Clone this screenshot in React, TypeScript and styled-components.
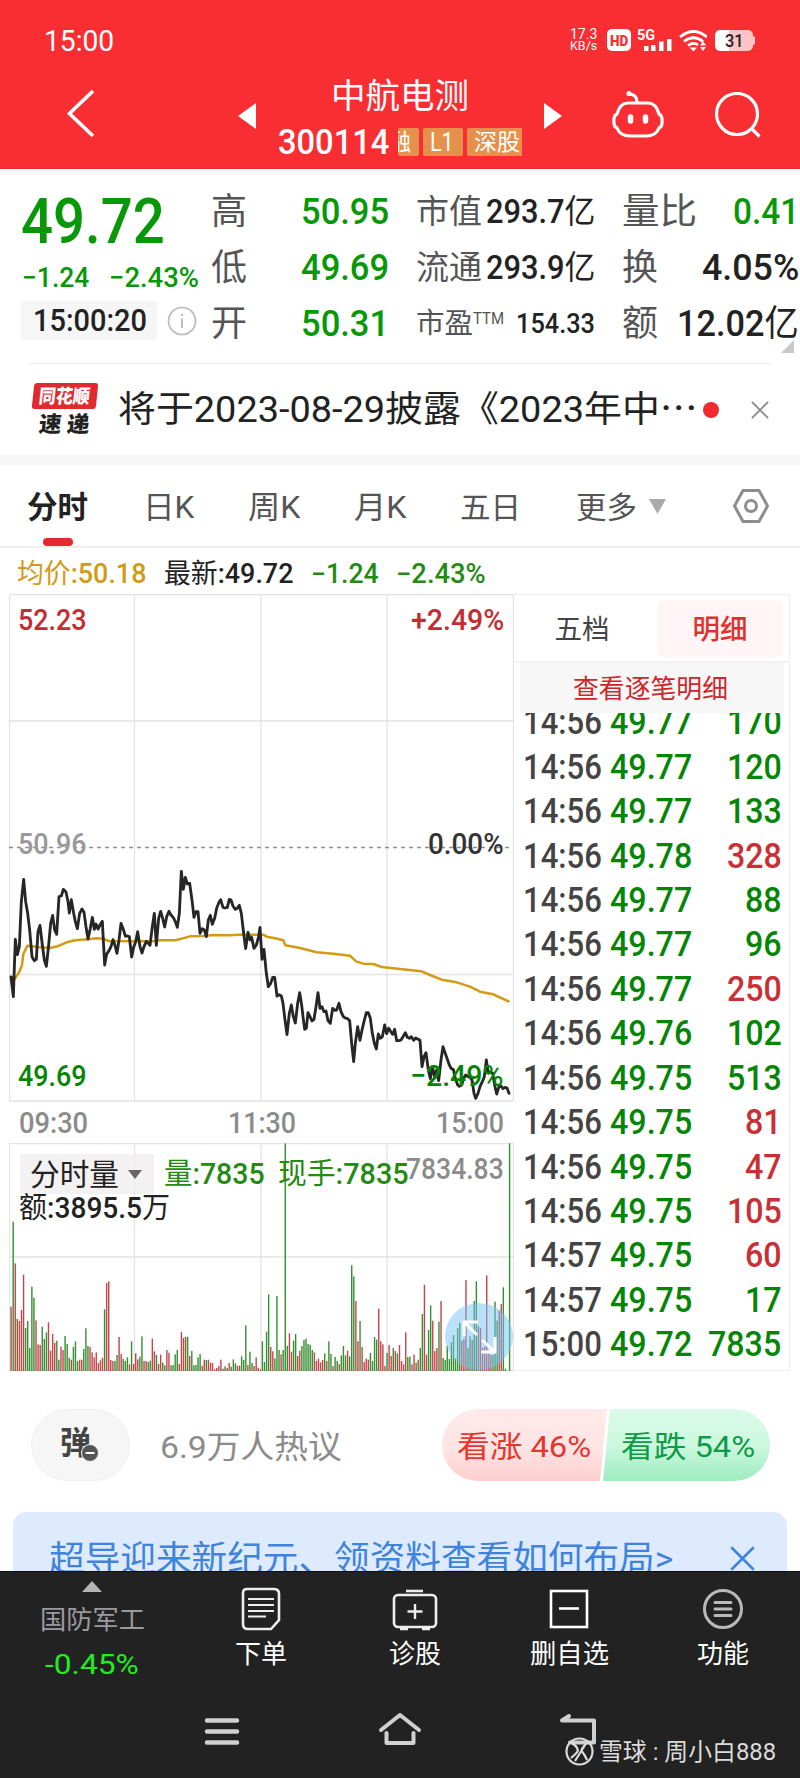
import React, { useLayoutEffect, useRef, useState } from "react";
import styled, { createGlobalStyle } from "styled-components";

const GlobalStyle = createGlobalStyle`
  * { box-sizing: border-box; }
  body { margin: 0; background: #fff; }
  svg { display: block; flex: none; }
`;

const C = {
  red: "#f92e33",
  green: "#069806",
  deepGreen: "#238a12",
  tradeGreen: "#058505",
  tradeRed: "#c92f35",
  ink: "#222",
  label: "#555",
  grey: "#8b8b8b",
  line: "#e4e4e6",
};

/* ---------- text fitted to a column width ---------- */

const FitBox = styled.span<{ $w: number; $h: number }>`
  display: block;
  flex: none;
  width: ${(p) => p.$w}px;
  height: ${(p) => p.$h}px;
`;

const FitText = styled.span<{ $size: number; $h: number; $color: string; $weight: number }>`
  display: inline-block;
  vertical-align: top;
  white-space: pre;
  transform-origin: 0 50%;
  font-family: Roboto, "Noto Sans CJK SC", sans-serif;
  font-size: ${(p) => p.$size}px;
  line-height: ${(p) => p.$h}px;
  font-weight: ${(p) => p.$weight};
  color: ${(p) => p.$color};
`;

const Han = styled.span`
  font-weight: 400;
`;

interface FitProps {
  w: number;
  size: number;
  h?: number;
  color?: string;
  weight?: number;
  children: string;
}

// Medium-weight figures are paired with regular-weight characters.
function Fit({ w, size, h, color = C.ink, weight = 400, children }: FitProps) {
  const ref = useRef<HTMLSpanElement>(null);
  const [scale, setScale] = useState(1);
  const height = h ?? Math.round(size * 1.2);
  useLayoutEffect(() => {
    if (ref.current) setScale(w / ref.current.offsetWidth);
  }, [w, size, children]);
  const parts = weight === 500 ? children.split(/([\u4e00-\u9fff]+)/).filter(Boolean) : [children];
  return (
    <FitBox $w={w} $h={height}>
      <FitText ref={ref} $size={size} $h={height} $color={color} $weight={weight} style={{ transform: `translateY(1px) scaleX(${scale})` }}>
        {parts.map((part, i) => (weight === 500 && /[\u4e00-\u9fff]/.test(part) ? <Han key={i}>{part}</Han> : part))}
      </FitText>
    </FitBox>
  );
}

/* ---------- page ---------- */

const Page = styled.div`
  width: 800px;
  height: 1778px;
  overflow: hidden;
  display: flex;
  flex-direction: column;
  background: #fff;
`;

const Header = styled.header`
  height: 169px;
  flex: none;
  background: ${C.red};
  border-bottom: 1px solid #d92c33;
`;

const StatusBar = styled.div`
  height: 73px;
  padding: 7px 45px 0 44px;
  display: flex;
  align-items: center;
  justify-content: space-between;
`;

const StatusIcons = styled.div`
  display: flex;
  align-items: center;
`;

const Speed = styled.div`
  width: 28px;
  margin: -3px 9px 0 0;
`;

const HdBadge = styled.div`
  width: 24px;
  height: 22px;
  margin-right: 6px;
  border-radius: 5px;
  background: #fff;
  display: flex;
  justify-content: center;
  align-items: center;
`;

const Battery = styled.div`
  width: 38px;
  height: 21px;
  margin-left: 8px;
  border-radius: 5px;
  background: linear-gradient(90deg, #fff 36%, #fdc3c6 36%);
  display: flex;
  justify-content: center;
`;

const BatteryTip = styled.div`
  width: 2px;
  height: 9px;
  border-radius: 0 2px 2px 0;
  background: #fdc3c6;
`;

const TitleBar = styled.div`
  height: 95px;
  display: flex;
  align-items: flex-start;
  padding-left: 66px;
`;

const IconSlot = styled.div<{ $top: number; $left: number }>`
  margin-top: ${(p) => p.$top}px;
  margin-left: ${(p) => p.$left}px;
`;

const TitleBlock = styled.div`
  width: 244px;
  margin-left: 22px;
  display: flex;
  flex-direction: column;
`;

const TitleName = styled.div`
  padding-left: 53px;
`;

const CodeRow = styled.div`
  display: flex;
  height: 30px;
  margin-top: 10px;
  align-items: center;
`;

const Tags = styled.div`
  display: flex;
  gap: 4px;
  width: 125px;
  height: 28px;
  margin-left: 9px;
  overflow: hidden;
`;

const Tag = styled.div<{ $w: number; $pad: number }>`
  flex: none;
  width: ${(p) => p.$w}px;
  padding-left: ${(p) => p.$pad}px;
  height: 28px;
  border-radius: 2px;
  background: #e6914b;
  overflow: hidden;
`;

const ClippedLeft = styled.div`
  margin-left: -11px;
`;

/* quote */

const Quote = styled.section`
  height: 194px;
  flex: none;
  display: flex;
  padding-top: 14px;
  position: relative;
`;

const PriceColumn = styled.div`
  width: 211px;
  padding-left: 21px;
`;

const ChangeRow = styled.div`
  display: flex;
  gap: 20px;
  margin-top: 2px;
  padding-left: 1px;
`;

const TimeRow = styled.div`
  display: flex;
  align-items: center;
  gap: 10px;
  margin-top: 8px;
`;

const TimeChip = styled.div`
  width: 136px;
  height: 39px;
  background: #f6f6f7;
  padding-left: 12px;
`;

const Stats = styled.div<{ $w: number; $gap: number }>`
  width: ${(p) => p.$w}px;
  margin-right: ${(p) => p.$gap}px;
`;

const StatRow = styled.div`
  height: 56px;
  display: flex;
  align-items: center;
  justify-content: space-between;
`;

const PeLabel = styled.div`
  display: flex;
  align-items: flex-start;
`;

const Corner = styled.svg`
  position: absolute;
  left: 781px;
  top: 171px;
`;

const Notice = styled.section`
  height: 92px;
  flex: none;
  display: flex;
  align-items: center;
  margin: 0 30px;
  border-top: 1px solid #ececec;
`;

const NewsLogo = styled.div`
  flex: none;
  width: 64px;
  height: 56px;
  display: flex;
  flex-direction: column;
  margin: 2px 21px 0 3px;
`;

const LogoTop = styled.div`
  height: 28px;
  padding-left: 6px;
  background: #df2a30;
  border-radius: 3px;
  transform: skewX(-6deg);
`;

const LogoBottom = styled.div`
  padding-left: 6px;
  transform: skewX(-6deg);
`;

const Dot = styled.i`
  flex: none;
  width: 16px;
  height: 16px;
  border-radius: 50%;
  background: #ef2b30;
  margin: 0 32px 0 5px;
`;

const Band = styled.div`
  height: 10px;
  flex: none;
  background: #f6f6f7;
`;

const Tabs = styled.nav`
  height: 83px;
  flex: none;
  border-bottom: 2px solid #efeff0;
  display: flex;
  padding-left: 27px;
`;

const Tab = styled.div<{ $left?: number }>`
  margin-left: ${(p) => p.$left ?? 0}px;
  display: flex;
  flex-direction: column;
  align-items: center;
  justify-content: space-between;
  padding-top: 23px;
`;

const TabMark = styled.i`
  width: 30px;
  height: 8px;
  border-radius: 4px;
  background: #e8272d;
`;

const Summary = styled.div`
  height: 46px;
  flex: none;
  display: flex;
  align-items: center;
  padding: 3px 0 0 17px;
`;

const Gap = styled.i<{ $w: number }>`
  width: ${(p) => p.$w}px;
`;

const Market = styled.section`
  height: 777px;
  flex: none;
  display: flex;
  padding-left: 9px;
`;

const Charts = styled.div`
  width: 505px;
`;

const Canvas = styled.div<{ $h: number }>`
  position: relative;
  height: ${(p) => p.$h}px;
`;

const Pin = styled.div<{ $x: number; $y: number }>`
  position: absolute;
  left: ${(p) => p.$x}px;
  top: ${(p) => p.$y}px;
`;

const Axis = styled.div`
  height: 42px;
  display: flex;
  align-items: center;
  padding: 0 10px;
  justify-content: space-between;
`;

const VolumeChip = styled.div`
  width: 134px;
  height: 40px;
  padding-left: 10px;
  background: rgba(240, 236, 238, 0.75);
  display: flex;
  align-items: center;
  gap: 9px;
`;

const Expand = styled.button`
  position: absolute;
  left: 436px;
  top: 160px;
  width: 68px;
  height: 67px;
  border: 0;
  padding: 0;
  border-radius: 50%;
  background: rgba(120, 195, 245, 0.5);
`;

const Trades = styled.div`
  width: 276px;
  border: 1px solid #eeeef0;
  border-left: 0;
  overflow: hidden;
`;

const BookTabs = styled.div`
  height: 68px;
  border-bottom: 2px solid #f2f2f3;
  display: flex;
  align-items: center;
  padding-left: 6px;
`;

const BookTab = styled.div<{ $active?: boolean; $w: number }>`
  width: ${(p) => p.$w}px;
  height: 57px;
  display: flex;
  justify-content: center;
  align-items: center;
  border-radius: 8px;
  background: ${(p) => (p.$active ? "#fff4f6" : "transparent")};
`;

const DetailLink = styled.div`
  height: 50px;
  margin: 0 5px 0 6px;
  padding: 1px 3px 0 0;
  background: #f7f7f7;
  display: flex;
  justify-content: center;
  align-items: center;
`;

const TradeList = styled.div`
  height: 657px;
  overflow: hidden;
`;

const TradeRows = styled.div`
  margin-top: -13px;
`;

const TradeRow = styled.div`
  height: 44.45px;
  display: flex;
  align-items: center;
  padding: 0 7px 0 9px;
`;

const TradePrice = styled.div`
  margin-left: 8px;
  flex: 1;
`;

/* social */

const Social = styled.section`
  height: 103px;
  margin-top: 38px;
  flex: none;
  display: flex;
  align-items: flex-start;
  padding-left: 31px;
`;

const Bullet = styled.div`
  width: 99px;
  height: 72px;
  border-radius: 36px;
  background: #f6f6f7;
  border: 1px solid #f0f0f0;
  position: relative;
  padding: 13px 0 0 28px;
`;

const BulletBadge = styled.svg`
  position: absolute;
  left: 48px;
  top: 33px;
`;

const HotText = styled.div`
  margin: 19px 0 0 30px;
`;

const Votes = styled.div`
  width: 328px;
  height: 72px;
  margin-left: 100px;
  display: flex;
  border-radius: 36px;
  overflow: hidden;
`;

const Vote = styled.div<{ $up?: boolean }>`
  height: 72px;
  width: ${(p) => (p.$up ? 167 : 168)}px;
  margin-left: ${(p) => (p.$up ? 0 : -7)}px;
  padding: 1px 0 0 ${(p) => (p.$up ? 15 : 19)}px;
  display: flex;
  align-items: center;
  background: ${(p) =>
    p.$up ? "linear-gradient(#ffeaea, #ffe4e4 55%, #fdcfcd)" : "linear-gradient(#dcfaea, #cdf8df 50%, #9eecbf)"};
  clip-path: ${(p) =>
    p.$up ? "polygon(0 0, 165px 0, 158px 100%, 0 100%)" : "polygon(8px 0, 100% 0, 100% 100%, 1px 100%)"};
`;

const Banner = styled.div`
  height: 59px;
  flex: none;
  margin: 0 13px;
  padding: 22px 32px 0 36px;
  border-radius: 14px 14px 0 0;
  background: #deebfe;
  display: flex;
  justify-content: space-between;
  overflow: hidden;
`;

const Dock = styled.footer`
  flex: none;
  height: 207px;
  background: #222;
  border-top: 1px solid #111;
  position: relative;
`;

const DockRow = styled.div`
  height: 121px;
  display: flex;
`;

const Sector = styled.div`
  width: 184px;
  display: flex;
  flex-direction: column;
  align-items: center;
  padding-top: 9px;
`;

const DockItem = styled.div`
  width: 154px;
  display: flex;
  flex-direction: column;
  align-items: center;
  padding-top: 15px;
  gap: 6px;
`;

const SystemNav = styled.div`
  display: flex;
  padding: 18px 0 0 202px;
`;

const Watermark = styled.div`
  position: absolute;
  left: 565px;
  top: 165px;
  display: flex;
  align-items: center;
  gap: 5px;
`;

/* ---------- data ---------- */

// Curves are stored in thirds of a pixel.
const PRICE =
  "33,441 40,500 46,328 52,374 58,350 64,215 71,148 77,215 83,250 89,300 96,380 103,392 109,388 114,305 120,286 127,345 133,390 139,409 146,345 152,280 158,256 164,300 170,313 177,200 184,198 190,178 198,186 204,215 208,249 214,209 221,250 226,275 232,296 239,250 246,237 252,247 258,290 264,327 271,295 277,262 283,298 288,282 294,297 300,285 307,274 314,405 320,372 327,362 333,350 339,329 345,346 351,370 357,330 363,280 370,298 376,318 382,318 388,320 395,381 401,352 407,335 413,305 420,350 426,369 432,350 439,334 445,340 450,346 457,290 463,250 469,346 476,265 482,244 488,265 494,291 500,260 507,244 513,255 520,263 526,275 532,292 538,250 544,124 550,178 556,142 562,162 569,160 576,210 582,262 588,245 594,245 600,310 607,296 613,300 619,320 625,270 631,256 637,283 644,265 650,235 657,217 662,209 669,232 675,234 682,232 688,208 693,210 699,228 706,238 712,235 718,226 724,250 731,310 737,356 744,307 750,330 755,322 762,355 769,345 776,320 780,292 786,388 792,358 799,430 805,470 812,460 818,442 824,442 831,498 837,494 844,498 849,520 855,570 861,614 868,550 874,525 880,560 886,579 893,520 899,488 905,525 909,560 914,598 919,595 924,548 930,560 936,573 942,568 948,530 954,488 960,535 966,530 972,545 978,543 984,572 991,580 998,535 1004,541 1010,540 1017,520 1023,545 1030,560 1035,564 1043,566 1049,572 1055,640 1061,695 1066,640 1073,590 1080,631 1086,600 1092,575 1099,548 1105,548 1111,565 1117,610 1123,640 1129,657 1135,612 1141,625 1147,620 1154,585 1160,611 1166,595 1173,606 1178,613 1184,598 1190,632 1197,632 1203,630 1209,620 1216,608 1222,622 1228,625 1234,620 1241,631 1247,624 1253,627 1260,631 1266,710 1272,680 1278,668 1285,720 1291,746 1297,710 1304,740 1310,720 1316,752 1323,690 1329,650 1335,668 1341,685 1348,705 1354,716 1360,718 1366,745 1373,765 1378,769 1385,765 1391,745 1397,735 1404,740 1410,742 1416,750 1422,790 1427,805 1434,790 1440,770 1447,755 1453,740 1459,690 1465,730 1471,726 1478,730 1484,765 1490,792 1497,770 1503,768 1509,776 1515,772 1521,774 1527,790";

const AVERAGE =
  "33,441 45,446 58,425 66,405 70,372 82,347 95,348 110,351 150,354 175,348 200,337 225,331 265,328 290,325 310,326 325,333 400,334 460,334 480,331 525,331 545,326 570,319 610,318 640,315 690,316 715,314 790,314 800,320 825,325 850,331 856,346 900,354 950,367 1000,371 1050,377 1068,394 1090,401 1120,402 1145,411 1200,417 1250,422 1265,424 1290,435 1325,449 1370,457 1410,470 1440,485 1480,493 1510,507 1526,514";

// One entry per minute: bar height (thirds of a pixel) and direction.
const VOLUME =
  "193r 448g 323r 156d 150r 183r 289r 129g 150g 69g 253g 220g 152r 80r 78r 133g 96g 116g 146r 61r 111r 85r 91g 34g 73r 63r 105g 81g 39g 34r 72g 89g 30g 34r 34r 66g 128g 75g 72r 56r 41r 56r 24r 32r 40r 185g 264r 269r 33r 30r 30g 48g 102r 51r 36g 30g 41g 20r 89g 21r 53r 35r 43g 104g 30r 30r 27g 31g 97r 59r 48g 21r 49r 25g 17g 63r 55r 17g 18g 50g 63g 21r 117r 99r 102d 102g 45r 60g 17g 18g 41g 51g 16r 34r 33g 34r 25r 24r 5r 9r 15r 34r 7g 14g 9r 24r 13g 35g 23g 16r 16r 44g 33g 137g 18r 58g 24g 15r 41r 10r 5r 89g 27g 118g 230g 72r 59r 38g 225g 63g 50r 63g 683g 75g 113r 58r 91g 111g 45r 61r 75g 93g 97g 81g 78g 63g 56r 30r 37r 26r 33r 53g 30r 89g 51g 15r 42g 30g 21r 47g 75g 47g 61r 44g 317g 284g 210r 89r 150g 72r 27r 37r 34r 54g 30g 102g 94g 187r 89r 80r 15r 54g 78r 45r 69g 60r 53g 78r 30r 20r 116r 42g 43g 20r 49r 25g 34r 69g 171g 259r 49r 123g 197g 151r 60r 69r 148g 210r 39g 33g 75g 36g 86g 108g 38g 129g 145g 90r 96r 273r 69g 104g 93r 210g 269g 135r 129r 69r 73r 287r 53r 48r 48g 208g 151g 181r 201r 251g 7g 0g 683g"
    .split(" ")
    .map((t) => ({ h: parseInt(t, 10) / 3, dir: t.slice(-1) }));

const BAR_COLORS: Record<string, string> = { r: "#c2454b", g: "#358f30", d: "#80641f" };

const TRADES: [string, string, string, boolean][] = [
  ["14:56", "49.77", "170", false],
  ["14:56", "49.77", "120", false],
  ["14:56", "49.77", "133", false],
  ["14:56", "49.78", "328", true],
  ["14:56", "49.77", "88", false],
  ["14:56", "49.77", "96", false],
  ["14:56", "49.77", "250", true],
  ["14:56", "49.76", "102", false],
  ["14:56", "49.75", "513", false],
  ["14:56", "49.75", "81", true],
  ["14:56", "49.75", "47", true],
  ["14:56", "49.75", "105", true],
  ["14:57", "49.75", "60", true],
  ["14:57", "49.75", "17", false],
  ["15:00", "49.72", "7835", false],
];

function Stat({ label, lw, ls = 36, value, vw, vs = 36.5, color = C.ink }: {
  label: string; lw: number; ls?: number; value: string; vw: number; vs?: number; color?: string;
}) {
  return (
    <StatRow>
      <Fit w={lw} size={ls} color={C.label}>{label}</Fit>
      <Fit w={vw} size={vs} color={color} weight={500}>{value}</Fit>
    </StatRow>
  );
}

function Cross({ size, color, stroke }: { size: number; color: string; stroke: number }) {
  return (
    <svg width={size} height={size} viewBox="0 0 20 20" stroke={color} strokeWidth={stroke} fill="none">
      <path d="M1 1L19 19M19 1L1 19" />
    </svg>
  );
}

function PriceChart() {
  return (
    <Canvas $h={507}>
      <svg width="505" height="508" viewBox="0 0 505 508" fill="none">
        <path d="M.5 .5H504.5V507H.5ZM125.5 0V507M252 0V507M378 0V507M0 127H504M0 380.500H504" stroke={C.line} strokeWidth="1.3" />
        <path d="M0 253.5H504" stroke="#8f8f8f" strokeWidth="1.5" strokeDasharray="4 4" />
        <g transform="translate(-9 236) scale(.33333)" strokeLinejoin="round" strokeLinecap="round">
          <polyline points={AVERAGE} stroke="#d39a15" strokeWidth="7.500" />
          <polyline points={PRICE} stroke="#262626" strokeWidth="8.500" />
        </g>
      </svg>
      <Pin $x={9} $y={7}><Fit w={69} size={30} weight={500} color="#c32c30">52.23</Fit></Pin>
      <Pin $x={402} $y={7}><Fit w={93} size={30} weight={500} color="#c32c30">+2.49%</Fit></Pin>
      <Pin $x={9} $y={231}><Fit w={69} size={30} weight={500} color="#999">50.96</Fit></Pin>
      <Pin $x={419} $y={231}><Fit w={76} size={30} weight={500} color="#333">0.00%</Fit></Pin>
      <Pin $x={9} $y={463}><Fit w={69} size={30} weight={500} color={C.tradeGreen}>49.69</Fit></Pin>
      <Pin $x={401} $y={463}><Fit w={93} size={30} weight={500} color={C.tradeGreen}>−2.49%</Fit></Pin>
    </Canvas>
  );
}

function VolumeChart() {
  return (
    <Canvas $h={228}>
      <svg width="505" height="228" viewBox="0 0 505 228" fill="none">
        <path d="M.5 .5H504.5V227.5H.5ZM125.5 0V227M252 0V227M378 0V227M0 114H504" stroke={C.line} strokeWidth="1.3" />
        {VOLUME.map((b, i) => (
          <rect key={i} x={1.4 + i * 2.077} y={228 - b.h} width="1.4" height={b.h} fill={BAR_COLORS[b.dir]} />
        ))}
      </svg>
      <Pin $x={11} $y={11}>
        <VolumeChip>
          <Fit w={89} size={30}>分时量</Fit>
          <svg width="14" height="9"><path d="M0 0H14L7 9Z" fill="#666" /></svg>
        </VolumeChip>
      </Pin>
      <Pin $x={155} $y={13}><Fit w={101} size={29} weight={500} color={C.deepGreen}>量:7835</Fit></Pin>
      <Pin $x={269} $y={13}><Fit w={131} size={29} weight={500} color={C.deepGreen}>现手:7835</Fit></Pin>
      <Pin $x={397} $y={7}><Fit w={98} size={30} weight={500} color={C.grey}>7834.83</Fit></Pin>
      <Pin $x={10} $y={47}><Fit w={151} size={29} weight={500}>额:3895.5万</Fit></Pin>
      <Expand aria-label="展开">
        <svg width="68" height="67" viewBox="0 0 68 67" fill="none" stroke="#fff" strokeWidth="3">
          <path d="M33 19H19V33M20 20L32 32M37 37L49 48M50 34V49H36" />
        </svg>
      </Expand>
    </Canvas>
  );
}

export default function App() {
  return (
    <Page>
      <GlobalStyle />
      <Header>
        <StatusBar>
          <Fit w={70} size={29} color="#fff">15:00</Fit>
          <StatusIcons>
            <Speed>
              <Fit w={27} size={14} h={12} color="#fff">17.3</Fit>
              <Fit w={27} size={12.5} h={12} color="#fff">KB/s</Fit>
            </Speed>
            <HdBadge><Fit w={18} size={15} h={20} color={C.red} weight={900}>HD</Fit></HdBadge>
            <svg width="36" height="24" viewBox="0 0 36 24" fill="#fff">
              <text x="0" y="12" fontFamily="Roboto" fontSize="14.5" fontWeight="700" textLength="18" lengthAdjust="spacingAndGlyphs">5G</text>
              <path d="M7 18h4.500v5h-4.500zM14 17h4.500v6h-4.500zM22 13.500h4.500v9.500h-4.500zM30 11h4.500v12h-4.500z" />
            </svg>
            <svg width="34" height="24" viewBox="0 0 34 24" fill="none" stroke="#fff" strokeWidth="2.7">
              <path d="M7 9Q20.500 -2 34 9M11 13.500Q20.500 6 30 13.500M15 17.500Q20.500 13.500 25 17" />
              <path d="M20.500 23.500L16.500 19.500H24Z" fill="#fff" stroke="none" />
              <path d="M30 13L33 17.500H27ZM30 23L27 19H33Z" fill="#fff" stroke="none" />
            </svg>
            <Battery><Fit w={19} size={19} h={20} weight={500}>31</Fit></Battery>
            <BatteryTip />
          </StatusIcons>
        </StatusBar>
        <TitleBar>
          <IconSlot $top={16} $left={0}>
            <svg width="30" height="50" fill="none" stroke="#fff" strokeWidth="3.6"><path d="M27 2L3.500 24.500L27 47" /></svg>
          </IconSlot>
          <IconSlot $top={30} $left={142}>
            <svg width="18" height="26"><path d="M18 0V26L0 13Z" fill="#fff" /></svg>
          </IconSlot>
          <TitleBlock>
            <TitleName><Fit w={138} size={34.5} h={44} color="#fff">中航电测</Fit></TitleName>
            <CodeRow>
              <Fit w={111} size={35} color="#fff" weight={500} h={34}>300114</Fit>
              <Tags>
                <Tag $w={21} $pad={0}><ClippedLeft><Fit w={24} size={23} h={28} color="#fff">融</Fit></ClippedLeft></Tag>
                <Tag $w={40} $pad={7}><Fit w={24} size={25} h={28} color="#fff">L1</Fit></Tag>
                <Tag $w={56} $pad={7}><Fit w={46} size={23} h={28} color="#fff">深股</Fit></Tag>
              </Tags>
            </CodeRow>
          </TitleBlock>
          <IconSlot $top={30} $left={22}>
            <svg width="18" height="26"><path d="M0 0V26L18 13Z" fill="#fff" /></svg>
          </IconSlot>
          <IconSlot $top={17} $left={49}>
            <svg width="54" height="50" viewBox="0 0 54 50" fill="none" stroke="#fff" strokeWidth="3.200" strokeLinecap="round">
              <path d="M17 13H37Q45 13 48 24Q52 26 51 33Q51 37 48 38Q45 46 35 46H19Q9 46 6 38Q3 37 3 33Q2 26 6 24Q9 13 17 13Z" />
              <path d="M26 12Q26 5 19 4" />
              <circle cx="18" cy="3.500" r="2.600" fill="#fff" stroke="none" />
              <path d="M19.500 27V31M34.500 27V31" strokeWidth="5.500" />
            </svg>
          </IconSlot>
          <IconSlot $top={19} $left={49}>
            <svg width="48" height="48" viewBox="0 0 48 48" fill="none" stroke="#fff" strokeWidth="3.200"><ellipse cx="23" cy="22" rx="20.500" ry="20.500" /><path d="M37 36L45.500 44.500" /></svg>
          </IconSlot>
        </TitleBar>
      </Header>

      <Quote>
        <PriceColumn>
          <Fit w={144} size={63} h={76} color={C.green} weight={500}>49.72</Fit>
          <ChangeRow>
            <Fit w={67} size={28} h={32} color={C.green} weight={500}>−1.24</Fit>
            <Fit w={90} size={28} h={32} color={C.green} weight={500}>−2.43%</Fit>
          </ChangeRow>
          <TimeRow>
            <TimeChip><Fit w={114} size={32} h={37} weight={500}>15:00:20</Fit></TimeChip>
            <svg width="30" height="30" fill="none" stroke="#bbb" strokeWidth="1.700"><circle cx="15" cy="15" r="13.500" /><path d="M15 12.500V22M15 8V10" strokeWidth="2" /></svg>
          </TimeRow>
        </PriceColumn>
        <Stats $w={178} $gap={27}>
          <Stat label="高" lw={36} value="50.95" vw={88} color={C.green} />
          <Stat label="低" lw={36} value="49.69" vw={88} color={C.green} />
          <Stat label="开" lw={36} value="50.31" vw={88} color={C.green} />
        </Stats>
        <Stats $w={179} $gap={27}>
          <Stat label="市值" lw={66} ls={33} value="293.7亿" vw={109} vs={32.5} />
          <Stat label="流通" lw={66} ls={33} value="293.9亿" vw={109} vs={32.5} />
          <StatRow>
            <PeLabel>
              <Fit w={57} size={28.5} color={C.label}>市盈</Fit>
              <Fit w={31} size={16} h={24} color={C.label}>TTM</Fit>
            </PeLabel>
            <Fit w={79} size={28.5} weight={500}>154.33</Fit>
          </StatRow>
        </Stats>
        <Stats $w={177} $gap={0}>
          <Stat label="量比" lw={75} value="0.41" vw={66} color={C.green} />
          <Stat label="换" lw={36} value="4.05%" vw={97} />
          <Stat label="额" lw={36} value="12.02亿" vw={122} />
        </Stats>
        <Corner width="13" height="13"><path d="M13 0V13H0Z" fill="#c9c9c9" /></Corner>
      </Quote>

      <Notice>
        <NewsLogo>
          <LogoTop><Fit w={51} size={19} h={26} color="#fff" weight={900}>同花顺</Fit></LogoTop>
          <LogoBottom><Fit w={50} size={22} h={30} weight={900}>速 递</Fit></LogoBottom>
        </NewsLogo>
        <Fit w={580} size={36}>将于2023-08-29披露《2023年中⋯</Fit>
        <Dot />
        <Cross size={18} color="#888" stroke={2} />
      </Notice>
      <Band />

      <Tabs>
        <Tab><Fit w={61} size={30.5} h={38} weight={600}>分时</Fit><TabMark /></Tab>
        <Tab $left={55}><Fit w={51} size={31} h={38} color={C.label}>日K</Fit></Tab>
        <Tab $left={54}><Fit w={52} size={31} h={38} color={C.label}>周K</Fit></Tab>
        <Tab $left={54}><Fit w={52} size={31} h={38} color={C.label}>月K</Fit></Tab>
        <Tab $left={54}><Fit w={61} size={30} h={38} color={C.label}>五日</Fit></Tab>
        <Tab $left={55}><Fit w={61} size={30} h={38} color={C.label}>更多</Fit></Tab>
        <IconSlot $top={34} $left={12}><svg width="17" height="15"><path d="M0 0H17L8.500 15Z" fill="#aaa" /></svg></IconSlot>
        <IconSlot $top={23} $left={66}>
          <svg width="38" height="36" viewBox="0 0 38 36" fill="none" stroke="#8d8d8d" strokeWidth="3" strokeLinejoin="round">
            <path d="M11 2.500H27L35.500 18L27 33.500H11L2.500 18Z" /><circle cx="19" cy="18" r="5.500" />
          </svg>
        </IconSlot>
      </Tabs>

      <Summary>
        <Fit w={129} size={27.5} weight={500} color="#d39a15">均价:50.18</Fit>
        <Gap $w={18} />
        <Fit w={129} size={27.5} weight={500}>最新:49.72</Fit>
        <Gap $w={18} />
        <Fit w={68} size={27} weight={500} color={C.deepGreen}>−1.24</Fit>
        <Gap $w={17} />
        <Fit w={90} size={27} weight={500} color={C.deepGreen}>−2.43%</Fit>
      </Summary>

      <Market>
        <Charts>
          <PriceChart />
          <Axis>
            <Fit w={69} size={30} weight={500} color={C.grey}>09:30</Fit>
            <Fit w={68} size={30} weight={500} color={C.grey}>11:30</Fit>
            <Fit w={68} size={30} weight={500} color={C.grey}>15:00</Fit>
          </Axis>
          <VolumeChart />
        </Charts>
        <Trades>
          <BookTabs>
            <BookTab $w={124}><Fit w={55} size={27.500} color="#444">五档</Fit></BookTab>
            <Gap $w={13} />
            <BookTab $w={126} $active><Fit w={55} size={27.500} weight={501} color="#e0312f">明细</Fit></BookTab>
          </BookTabs>
          <DetailLink><Fit w={155} size={26} color="#cf262b">查看逐笔明细</Fit></DetailLink>
          <TradeList>
            <TradeRows>
              {TRADES.map(([time, price, qty, up], i) => (
                <TradeRow key={i}>
                  <Fit w={79} size={35} weight={500} color="#444">{time}</Fit>
                  <TradePrice><Fit w={82} size={35} weight={500} color={C.tradeGreen}>{price}</Fit></TradePrice>
                  <Fit w={qty.length * 18.400} size={35} weight={500} color={up ? C.tradeRed : C.tradeGreen}>{qty}</Fit>
                </TradeRow>
              ))}
            </TradeRows>
          </TradeList>
        </Trades>
      </Market>

      <Social>
        <Bullet>
          <Fit w={31} size={32} h={38} weight={700} color="#444">弹</Fit>
          <BulletBadge width="20" height="20"><circle cx="10" cy="10" r="8.500" fill="#555" stroke="#f6f6f7" strokeWidth="1" /><path d="M5.500 10H14.500" stroke="#fff" strokeWidth="2" /></BulletBadge>
        </Bullet>
        <HotText><Fit w={182} size={31.500} color={C.grey}>6.9万人热议</Fit></HotText>
        <Votes>
          <Vote $up><Fit w={134} size={30} color="#e5352d">看涨 46%</Fit></Vote>
          <Vote><Fit w={134} size={30} color="#0d9c45">看跌 54%</Fit></Vote>
        </Votes>
      </Social>

      <Banner>
        <Fit w={624} size={35} h={50} color="#3f83dc">超导迎来新纪元、领资料查看如何布局&gt;</Fit>
        <IconSlot $top={12} $left={0}><Cross size={25} color="#3f83dc" stroke={2} /></IconSlot>
      </Banner>

      <Dock>
        <DockRow>
          <Sector>
            <svg width="20" height="11"><path d="M10 0L20 11H0Z" fill="#b5b5b5" /></svg>
            <IconSlot $top={10} $left={0}><Fit w={105} size={26.500} h={34} color="#9a9a9e">国防军工</Fit></IconSlot>
            <IconSlot $top={10} $left={0}><Fit w={94} size={28} h={36} color="#20ee20">-0.45%</Fit></IconSlot>
          </Sector>
          <DockItem>
            <svg width="40" height="44" viewBox="0 0 40 44" fill="none" stroke="#eee" strokeWidth="2.600">
              <path d="M6 2H33Q38 2 38 7V33L30 42H7Q2 42 2 37V6Q2 2 6 2Z" /><path d="M7 12H33M7 18H33M7 24H33M7 29.500H25" strokeWidth="2.200" />
            </svg>
            <Fit w={52} size={26} h={32} color="#fff">下单</Fit>
          </DockItem>
          <DockItem>
            <svg width="46" height="44" viewBox="0 0 46 44" fill="none" stroke="#eee" strokeWidth="2.600">
              <path d="M14 4H31" /><rect x="2" y="8" width="42" height="32" rx="4" /><path d="M23 17V32M15.500 24.500H30.500M8 42H16M30 42H38" strokeWidth="2.400" />
            </svg>
            <Fit w={52} size={26} h={32} color="#fff">诊股</Fit>
          </DockItem>
          <DockItem>
            <svg width="40" height="44" viewBox="0 0 40 44" fill="none" stroke="#fff" strokeWidth="2.600"><rect x="2" y="4" width="36" height="36" /><path d="M10 21.500H30" /></svg>
            <Fit w={79} size={26} h={32} color="#fff">删自选</Fit>
          </DockItem>
          <DockItem>
            <svg width="42" height="44" viewBox="0 0 42 44" fill="none" stroke="#b9b9b9" strokeWidth="3"><circle cx="21" cy="22" r="18.500" /><path d="M13 15.500H29M13 22H29M13 28.500H29" strokeLinecap="round" /></svg>
            <Fit w={52} size={26} h={32} color="#fff">功能</Fit>
          </DockItem>
        </DockRow>
        <SystemNav>
          <svg width="40" height="40" stroke="#d0d0d0" strokeWidth="4.500" strokeLinecap="round"><path d="M5 9.500H35M5 20.500H35M5 31.500H35" /></svg>
          <IconSlot $top={0} $left={136}>
            <svg width="44" height="40" fill="none" stroke="#d0d0d0" strokeWidth="4" strokeLinecap="round" strokeLinejoin="round"><path d="M3 19L22 4L41 19M8.500 22V32H35.500V22" /></svg>
          </IconSlot>
          <IconSlot $top={0} $left={136}>
            <svg width="42" height="40" fill="none" stroke="#d0d0d0" strokeWidth="4" strokeLinecap="round" strokeLinejoin="round"><path d="M11 5L4 9.500H36V31.500H12" /></svg>
          </IconSlot>
        </SystemNav>
        <Watermark>
          <svg width="29" height="29" viewBox="0 0 29 29" fill="none" stroke="#dcdcdc" strokeWidth="2.200"><circle cx="14.500" cy="14.500" r="13" /><path d="M7 6Q14 11 12.500 14.500Q11 17 6 21M22 6Q15 12 17 14.500Q20 18 22 23M10 24L20 8" /></svg>
          <Fit w={177} size={24} color="#dcdcdc">雪球 : 周小白888</Fit>
        </Watermark>
      </Dock>
    </Page>
  );
}
